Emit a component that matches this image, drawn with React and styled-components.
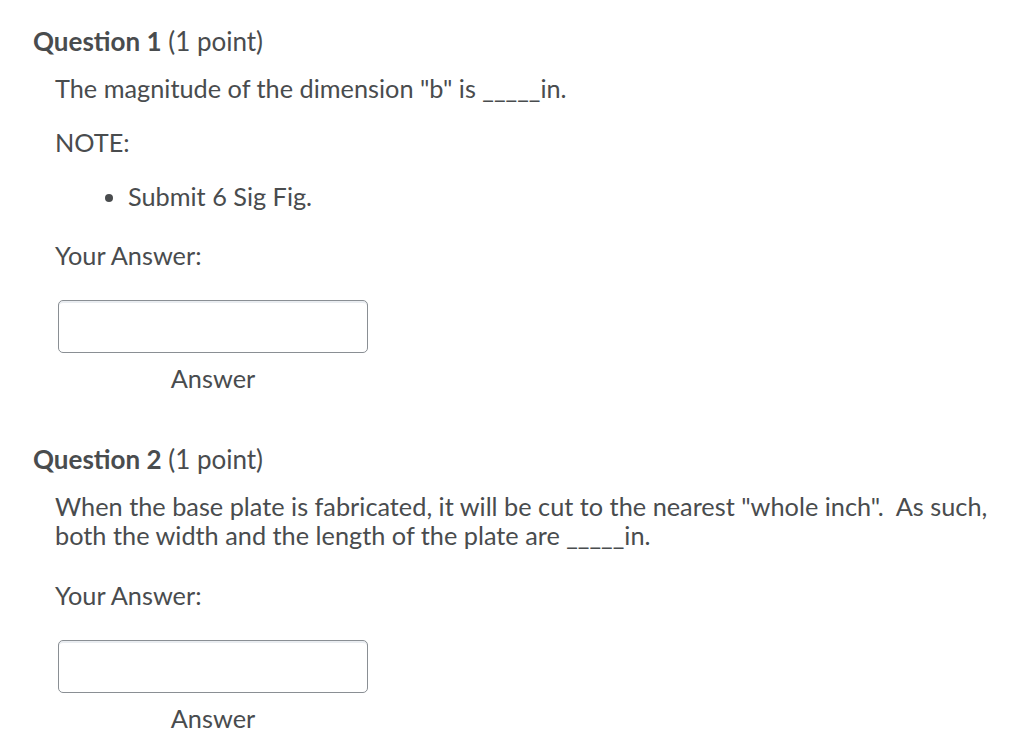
import styled, { createGlobalStyle } from "styled-components";

const GlobalStyle = createGlobalStyle`
  body {
    margin: 0;
    background: #fff;
    font-family: Lato, "Noto Sans", sans-serif;
    color: #494c4e;
  }
`;

const questions = [
  {
    num: 1,
    text: 'The magnitude of the dimension "b" is _____in.',
    note: ["Submit 6 Sig Fig."],
    after: 25,
  },
  {
    num: 2,
    text: 'When the base plate is fabricated, it will be cut to the nearest "whole inch".\u00a0 As such, both the width and the length of the plate are _____in.',
    after: 31,
  },
];

export default function App() {
  return (
    <>
      <GlobalStyle />
      <Page>
        {questions.map((q) => (
          <Question key={q.num}>
            <Heading>
              <strong>Question {q.num}</strong> (1 point)
            </Heading>
            <Body>
              <Para $after={q.after}>{q.text}</Para>
              {q.note && (
                <>
                  <Para>NOTE:</Para>
                  <NoteList>
                    {q.note.map((n) => (
                      <li key={n}>{n}</li>
                    ))}
                  </NoteList>
                </>
              )}
              <Para>Your Answer:</Para>
              <AnswerField>
                <AnswerInput type="text" aria-label="Answer" />
                <AnswerLabel>Answer</AnswerLabel>
              </AnswerField>
            </Body>
          </Question>
        ))}
      </Page>
    </>
  );
}

const Page = styled.div`
  padding: 24px 33px 0;
  display: flex;
  flex-direction: column;
  gap: 49px;
`;

const Question = styled.section`
  display: flex;
  flex-direction: column;
`;

const Heading = styled.h2`
  margin: 0;
  font-size: 26px;
  font-weight: 400;
  line-height: 34px;

  strong {
    font-weight: 700;
  }
`;

const Body = styled.div`
  padding-left: 22px;
  padding-top: 16px;
  display: flex;
  flex-direction: column;
  font-size: 25.3px;
  line-height: 29px;
`;

const Para = styled.p`
  margin: 0 0 ${(p) => p.$after ?? 25}px;
`;

const NoteList = styled.ul`
  margin: 0 0 30px;
  padding-left: 73px;

  li {
    line-height: 29px;
  }
`;

const AnswerField = styled.div`
  display: flex;
  flex-direction: column;
  width: 310px;
  margin-left: 3px;
  margin-top: 5px;
`;

const AnswerInput = styled.input`
  height: 53px;
  box-sizing: border-box;
  border: 1px solid #8a8f94;
  border-radius: 5px;
  background: #fff;
  box-shadow: inset 0 2px 0 0 rgba(185, 194, 208, 0.3);
`;

const AnswerLabel = styled.span`
  text-align: center;
  margin-top: 11px;
  font-size: 25.3px;
  line-height: 29px;
`;
